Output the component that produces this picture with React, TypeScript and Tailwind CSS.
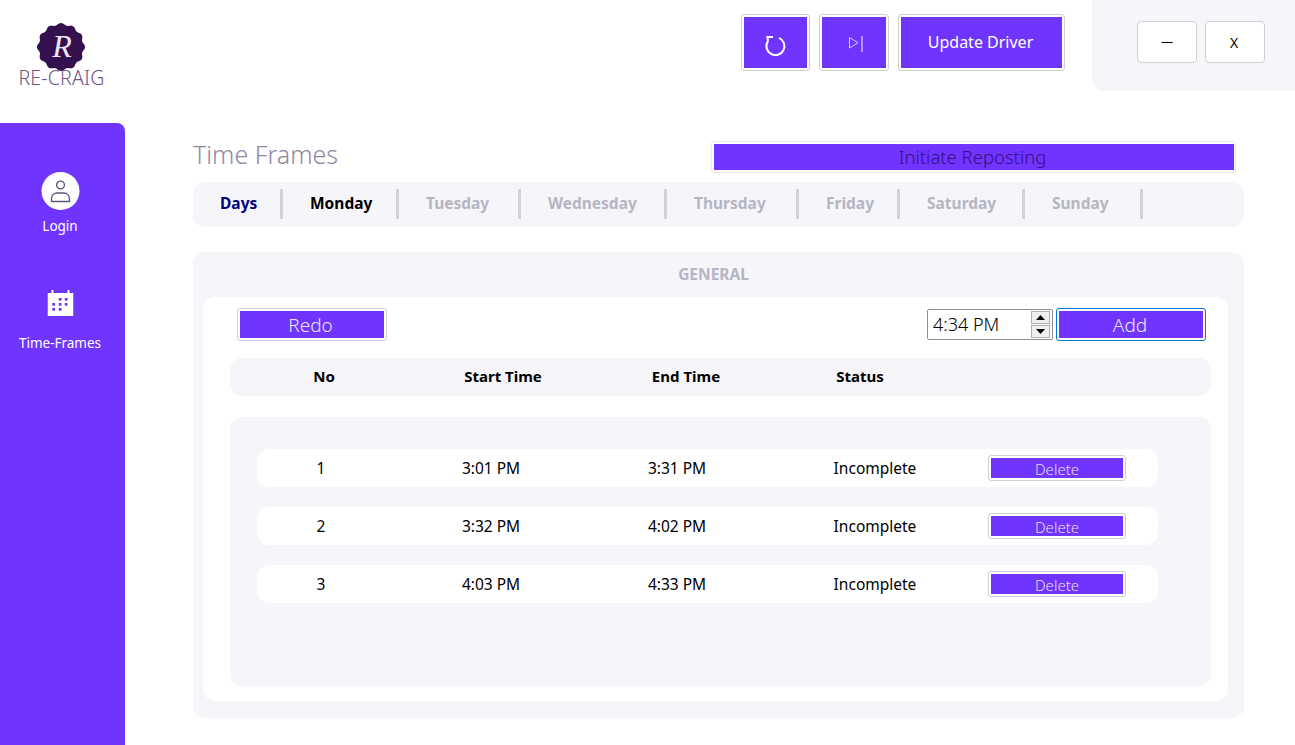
import React from 'react';

const font = "font-['Noto_Sans','Open_Sans',sans-serif]";

const days = [
  { label: 'Days', w: 'w-[90px]', color: 'text-[#000080]' },
  { label: 'Monday', w: 'w-[116px]', color: 'text-black' },
  { label: 'Tuesday', w: 'w-[122px]', color: 'text-[#b5b5c3]' },
  { label: 'Wednesday', w: 'w-[146px]', color: 'text-[#b5b5c3]' },
  { label: 'Thursday', w: 'w-[132px]', color: 'text-[#b5b5c3]' },
  { label: 'Friday', w: 'w-[101px]', color: 'text-[#b5b5c3]' },
  { label: 'Saturday', w: 'w-[125px]', color: 'text-[#b5b5c3]' },
  { label: 'Sunday', w: 'w-[118px]', color: 'text-[#b5b5c3]' },
];

const rows = [
  { no: 1, start: '3:01 PM', end: '3:31 PM' },
  { no: 2, start: '3:32 PM', end: '4:02 PM' },
  { no: 3, start: '4:03 PM', end: '4:33 PM' },
];

// scalloped badge behind the logo letter
const badge = (() => {
  const n = 12;
  const pts: string[] = [];
  for (let i = 0; i <= 120; i++) {
    const a = (i / 120) * Math.PI * 2;
    const r = 23 + 1.1 * Math.cos(a * n);
    pts.push(`${(25 + r * Math.sin(a)).toFixed(2)},${(25 - r * Math.cos(a)).toFixed(2)}`);
  }
  return pts.join(' ');
})();

const purple =
  'border border-[#cfcfcf] rounded-[3px] p-[2px] bg-[#7034ff] bg-clip-content';

function Logo() {
  return (
    <div className="w-[125px] h-[123px] flex flex-col items-center pt-[22px] shrink-0">
      <svg width="50" height="50" viewBox="0 0 50 50" className="-mb-[3px] -translate-x-[2px]">
        <polygon points={badge} fill="#35104f" />
        <text
          x="26"
          y="35"
          textAnchor="middle"
          fontSize="32"
          fontStyle="italic"
          fontFamily="'Liberation Serif', serif"
          fill="#efe6f4"
        >
          R
        </text>
      </svg>
      <span className="text-[19.5px] leading-[18px] font-light text-[#6f5585] tracking-[0.2px] -translate-x-[1px]">
        RE-CRAIG
      </span>
    </div>
  );
}

function Sidebar() {
  return (
    <aside className="w-[125px] h-[622px] bg-[#7034ff] rounded-tr-lg flex flex-col items-center text-white text-[13.5px] shrink-0">
      <div className="mt-[49px] w-[38px] h-[38px] rounded-full bg-white flex items-center justify-center -translate-x-[2.5px]">
        <svg width="24" height="24" viewBox="0 0 24 24" fill="none" stroke="#5c5a78" strokeWidth="1.4">
          <circle cx="12" cy="6" r="3.9" />
          <path d="M3 22.500v-3c0-3 2.500-5.500 5.500-5.500h7c3 0 5.500 2.500 5.500 5.500v3z" strokeLinejoin="round" />
        </svg>
      </div>
      <span className="mt-[6px] leading-[20px] -translate-x-[2.5px]">Login</span>
      <svg width="26" height="26" viewBox="0 0 26 26" className="mt-[54px] -translate-x-[2.5px]">
        <path d="M0 3h4V0h2v3h14V0h2v3h4v23H0z" fill="#fff" />
        <g fill="#7034ff">
          <rect x="11.300" y="8" width="2.700" height="2.700" />
          <rect x="17.300" y="8" width="2.700" height="2.700" />
          <rect x="4.800" y="13" width="2.700" height="2.700" />
          <rect x="11.300" y="13" width="2.700" height="2.700" />
          <rect x="17.300" y="13" width="2.700" height="2.700" />
          <rect x="4.800" y="18" width="2.700" height="2.700" />
          <rect x="11.300" y="18" width="2.700" height="2.700" />
        </g>
      </svg>
      <span className="mt-[17px] leading-[20px] -translate-x-[2.5px] whitespace-nowrap">Time-Frames</span>
    </aside>
  );
}

function TimeInput() {
  return (
    <div className="w-[126px] h-[31px] border border-[#8f8f8f] rounded-[2px] flex items-center justify-between pl-[5px] pr-[2px] bg-white">
      <span className="text-[18px] font-light text-black">4:34 PM</span>
      <div className="flex flex-col gap-[1px]">
        <button className="w-[19px] h-[13px] bg-[#efefef] border border-[#b0b0b0] flex items-center justify-center">
          <svg width="9" height="5" viewBox="0 0 9 5"><path d="M4.500 0 9 5H0z" fill="#000" /></svg>
        </button>
        <button className="w-[19px] h-[13px] bg-[#efefef] border border-[#b0b0b0] flex items-center justify-center">
          <svg width="9" height="5" viewBox="0 0 9 5"><path d="M0 0h9L4.500 5z" fill="#000" /></svg>
        </button>
      </div>
    </div>
  );
}

export default function App() {
  return (
    <div className={`w-[1295px] h-[745px] overflow-hidden bg-white flex flex-col ${font}`}>
      <header className="h-[123px] flex shrink-0">
        <Logo />
        <div className="flex-1 flex items-start pt-[14px] pl-[616px] gap-[9px]">
          <button className={`${purple} w-[69px] h-[57px] flex items-center justify-center`}>
            <svg width="24" height="24" viewBox="0 0 24 24" fill="none" stroke="#fff" strokeWidth="2" className="translate-y-[3px] -translate-x-[0.5px]">
              <path d="M15.500 3.800A9 9 0 1 1 4.600 6.800" />
              <path d="M9.500 3H3.800l.8 3.800" />
            </svg>
          </button>
          <button className={`${purple} w-[70px] h-[57px] flex items-center justify-center`}>
            <svg width="16" height="18" viewBox="0 0 16 18" fill="none" stroke="#d9c8ff" strokeWidth="1" className="translate-x-[2px] translate-y-[1.500px]">
              <path d="M1.500 2v10.500l8.500-5.250z" />
              <path d="M14 .500v16" strokeWidth="1.300" />
            </svg>
          </button>
          <button className={`${purple} w-[167px] h-[57px] text-white text-[16px]`}>
            <span className="block -translate-x-[1px] -translate-y-[1px]">Update Driver</span>
          </button>
        </div>
        <div className="w-[203px] h-[91px] bg-[#f5f5fa] rounded-bl-xl flex items-start pt-[21px] pl-[45px] gap-[8px]">
          <button className="w-[60px] h-[42px] bg-white border border-[#cfcfcf] rounded-[4px] text-[12px] text-black">—</button>
          <button className="w-[60px] h-[42px] bg-white border border-[#cfcfcf] rounded-[4px] text-[14px] text-black">
            <span className="block -translate-x-[1px]">X</span>
          </button>
        </div>
      </header>

      <div className="flex flex-1">
        <Sidebar />
        <main className="flex-1 pl-[68px] pr-[51px] pt-[18px]">
          <div className="flex items-start justify-between h-[41px] pr-[8px]">
            <h1 className="text-[25px] leading-[30px] -translate-y-[2px] font-light text-[#8f88a3]">Time Frames</h1>
            <button className="w-[525px] h-[32px] border border-[#e8e8e8] rounded-[3px] py-[2px] px-[1.500px] bg-[#7034ff] bg-clip-content text-[#35107f] text-[18.500px] leading-[26px] font-light">
              <span className="block -translate-x-[1px]">Initiate Reposting</span>
            </button>
          </div>

          <nav className="h-[45px] bg-[#f5f5fa] rounded-xl flex items-start pt-[7px]">
            {days.map((d) => (
              <div
                key={d.label}
                className={`${d.w} h-[30px] border-r-[3px] border-[#d3d3d3] pl-[27px] pb-[1px] flex items-center text-[15.500px] font-bold whitespace-nowrap ${d.color}`}
              >
                {d.label}
              </div>
            ))}
          </nav>

          <section className="mt-[25px] h-[466px] bg-[#f5f5fa] rounded-xl px-[10px] pr-[16px] flex flex-col">
            <h2 className="h-[45px] flex items-center justify-center text-[15.500px] font-bold text-[#b5b5c3] uppercase pr-[4px]">General</h2>
            <div className="h-[404px] bg-white rounded-xl pl-[27px] pr-[17px] flex flex-col">
              <div className="flex items-center justify-between pt-[11px] h-[61px] pb-[17px]">
                <button className={`${purple} ml-[7px] w-[150px] h-[33px] text-[#ece5ff] text-[19px] leading-[26px] font-light`}>
                  <span className="block -translate-x-[1.500px]">Redo</span>
                </button>
                <div className="flex items-center gap-[3px] mr-[5px]">
                  <TimeInput />
                  <button className="w-[150px] h-[33px] border border-[#0078d7] rounded-[3px] p-[2px] bg-[#7034ff] bg-clip-content text-[#ece5ff] text-[19px] leading-[26px] font-light">
                    <span className="block -translate-x-[1px]">Add</span>
                  </button>
                </div>
              </div>

              <div className="h-[38px] bg-[#f5f5fa] rounded-xl flex items-center pb-[1px] text-[15px] font-bold text-black text-center">
                <span className="w-[188px]">No</span>
                <span className="w-[170px]">Start Time</span>
                <span className="w-[196px]">End Time</span>
                <span className="w-[152px]">Status</span>
              </div>

              <div className="mt-[21px] h-[269px] bg-[#f5f5fa] rounded-xl pt-[32px] pl-[27px] flex flex-col gap-[20px]">
                {rows.map((r) => (
                  <div key={r.no} className="w-[901px] h-[38px] bg-white rounded-xl flex items-center text-[15.500px] text-black text-center">
                    <span className="w-[128px] translate-y-[1px]">{r.no}</span>
                    <span className="ml-[10px] w-[192px] translate-y-[1px]">{r.start}</span>
                    <span className="w-[180px] translate-y-[1px]">{r.end}</span>
                    <span className="w-[216px] translate-y-[1px]">Incomplete</span>
                    <button className={`${purple} ml-[5px] w-[138px] h-[26px] text-[#e6dcff] text-[15px] leading-[18px] font-light`}>
                      <span className="block translate-y-[1px]">Delete</span>
                    </button>
                  </div>
                ))}
              </div>
            </div>
          </section>
        </main>
      </div>
    </div>
  );
}
